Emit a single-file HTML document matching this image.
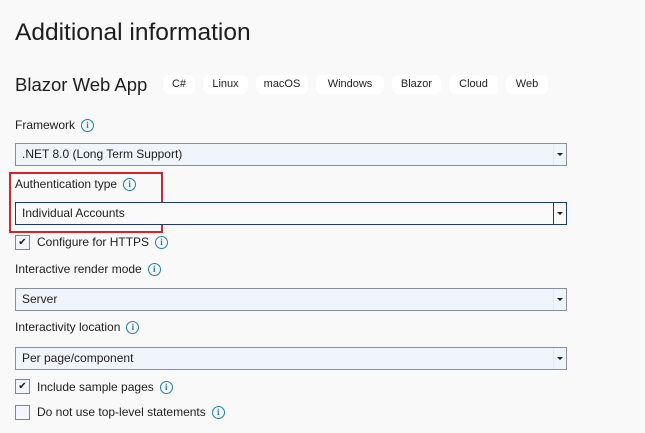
<!DOCTYPE html>
<html><head><style>
body{margin:0;width:645px;height:433px;background:#f9f9f9;font-family:"Liberation Sans",sans-serif;color:#1e1e1e;position:relative;overflow:hidden}
.a{position:absolute;white-space:nowrap}
.lbl{font-size:12px;line-height:14px}
.tag{position:absolute;top:75px;height:19px;background:#fff;border-radius:6px;font-size:11px;line-height:19px;text-align:center}
.dd{position:absolute;left:15px;width:550px;height:21px;background:#f0f4fb;border:1px solid #8a9099;font-size:12px;line-height:21px}
.dd span{position:absolute;left:6px}
.dd .ar{position:absolute;right:0;top:0;width:12px;height:21px;border-left:1px solid #e6e9ef}
.dd .ar:after{content:"";position:absolute;left:3px;top:9px;border-left:3px solid transparent;border-right:3px solid transparent;border-top:3px solid #1e1e1e}
.i{display:inline-block;width:11px;height:11px;border:1px solid #1a7fc1;border-radius:50%;color:#1a7fc1;font-size:9px;line-height:11px;text-align:center;font-weight:bold;vertical-align:top;margin-top:1px;margin-left:6px;font-family:"Liberation Serif",serif}
.cb{position:absolute;left:15px;width:13px;height:13px;border:1px solid #808690;background:#f3f6fc;font-size:10px;line-height:13px;text-align:center}
</style></head><body>
<div class="a" style="left:15px;top:19px;font-size:24.5px;color:#1e1e1e">Additional information</div>
<div class="a" style="left:15px;top:74px;font-size:18.5px">Blazor Web App</div>
<div class="tag" style="left:163px;width:32px">C#</div>
<div class="tag" style="left:203px;width:45px">Linux</div>
<div class="tag" style="left:256px;width:52px">macOS</div>
<div class="tag" style="left:316px;width:68px">Windows</div>
<div class="tag" style="left:392px;width:49px">Blazor</div>
<div class="tag" style="left:449px;width:49px">Cloud</div>
<div class="tag" style="left:506px;width:42px">Web</div>

<div class="a lbl" style="left:15px;top:118px">Framework<span class="i">i</span></div>
<div class="dd" style="top:143px"><span>.NET 8.0 (Long Term Support)</span><div class="ar"></div></div>

<div class="a" style="left:9px;top:172px;width:150px;height:57px;border:2px solid #e0202a"></div>
<div class="a lbl" style="left:15px;top:177px">Authentication type<span class="i">i</span></div>
<div class="dd" style="top:202px;background:#fafafa;border-color:#1e3a72"><span>Individual Accounts</span><div class="ar" style="border-left-color:#1e3a72"></div></div>

<div class="cb" style="top:235px">✔</div>
<div class="a lbl" style="left:37px;top:235px">Configure for HTTPS<span class="i">i</span></div>

<div class="a lbl" style="left:15px;top:262px">Interactive render mode<span class="i">i</span></div>
<div class="dd" style="top:288px"><span>Server</span><div class="ar"></div></div>

<div class="a lbl" style="left:15px;top:320px">Interactivity location<span class="i">i</span></div>
<div class="dd" style="top:347px"><span>Per page/component</span><div class="ar"></div></div>

<div class="cb" style="top:379px">✔</div>
<div class="a lbl" style="left:37px;top:380px">Include sample pages<span class="i">i</span></div>
<div class="cb" style="top:405px"></div>
<div class="a lbl" style="left:37px;top:405px">Do not use top-level statements<span class="i">i</span></div>
</body></html>
